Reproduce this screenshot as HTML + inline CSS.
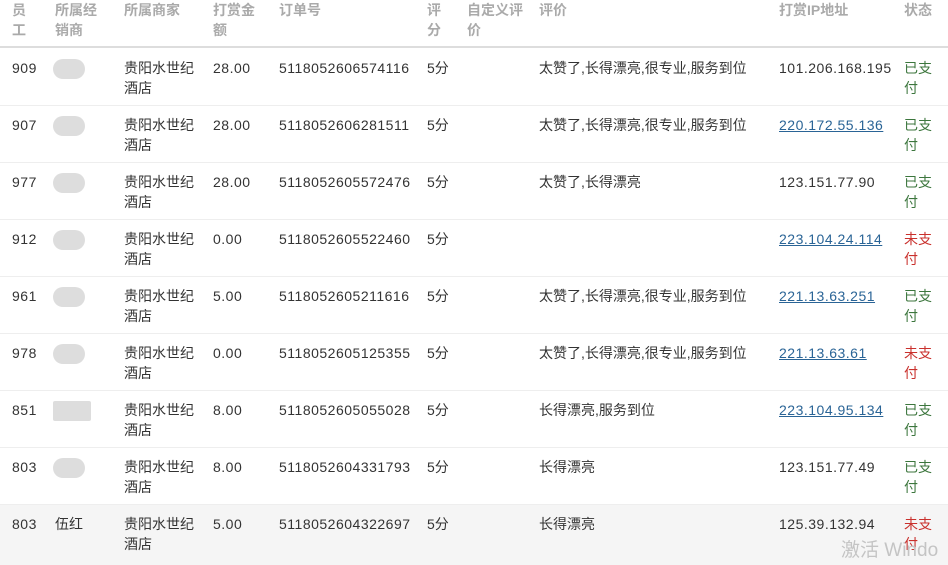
<!DOCTYPE html>
<html><head><meta charset="utf-8"><style>
body{margin:0;width:948px;height:565px;overflow:hidden;background:#fff;font-family:"Liberation Sans","Noto Sans CJK SC",sans-serif;font-size:14px;color:#333;position:relative}
.a{position:absolute;line-height:20px;white-space:nowrap}
.n{letter-spacing:0.5px}
.h{color:#aaa;font-weight:bold}
.ln{position:absolute;left:0;width:948px;height:1px;background:#eee}
.blob{position:absolute;height:20px;border-radius:10px;background:#ddd}
a{color:#2a6496;text-decoration:underline}
.g{color:#3c763d}.r{color:#c9302c}
</style></head><body>
<div style="position:absolute;left:0;top:505px;width:948px;height:60px;background:#f5f5f5"></div>
<div style="position:absolute;left:0;top:46px;width:948px;height:2px;background:#ddd"></div>
<div class="a h" style="left:12px;top:0">员<br>工</div>
<div class="a h" style="left:55px;top:0">所属经<br>销商</div>
<div class="a h" style="left:124px;top:0">所属商家</div>
<div class="a h" style="left:213px;top:0">打赏金<br>额</div>
<div class="a h" style="left:279px;top:0">订单号</div>
<div class="a h" style="left:427px;top:0">评<br>分</div>
<div class="a h" style="left:467px;top:0">自定义评<br>价</div>
<div class="a h" style="left:539px;top:0">评价</div>
<div class="a h" style="left:779px;top:0">打赏IP地址</div>
<div class="a h" style="left:904px;top:0">状态</div>
<div id="rows"></div>
<script>
var d=[["909","28.00","5118052606574116","太赞了,长得漂亮,很专业,服务到位","101.206.168.195",0,1],
["907","28.00","5118052606281511","太赞了,长得漂亮,很专业,服务到位","220.172.55.136",1,1],
["977","28.00","5118052605572476","太赞了,长得漂亮","123.151.77.90",0,1],
["912","0.00","5118052605522460","","223.104.24.114",1,0],
["961","5.00","5118052605211616","太赞了,长得漂亮,很专业,服务到位","221.13.63.251",1,1],
["978","0.00","5118052605125355","太赞了,长得漂亮,很专业,服务到位","221.13.63.61",1,0],
["851","8.00","5118052605055028","长得漂亮,服务到位","223.104.95.134",1,1],
["803","8.00","5118052604331793","长得漂亮","123.151.77.49",0,1],
["803","5.00","5118052604322697","长得漂亮","125.39.132.94",0,0]];
var h="";
d.forEach(function(r,i){var t=58+i*57;
if(i>0)h+='<div class="ln" style="top:'+(t-10)+'px"></div>';
h+='<div class="a n" style="left:12px;top:'+t+'px">'+r[0]+'</div>';
if(i==8)h+='<div class="a" style="left:55px;top:'+t+'px">伍红</div>';
else h+='<div class="blob" style="left:53px;top:'+(t+1)+'px;width:'+(i==6?38:32)+'px;border-radius:'+(i==6?'2px':'10px')+'"></div>';
h+='<div class="a" style="left:124px;top:'+t+'px">贵阳水世纪<br>酒店</div>';
h+='<div class="a n" style="left:213px;top:'+t+'px">'+r[1]+'</div>';
h+='<div class="a n" style="left:279px;top:'+t+'px">'+r[2]+'</div>';
h+='<div class="a" style="left:427px;top:'+t+'px">5分</div>';
h+='<div class="a" style="left:539px;top:'+t+'px">'+r[3]+'</div>';
h+='<div class="a n" style="left:779px;top:'+t+'px">'+(r[5]?'<a>'+r[4]+'</a>':r[4])+'</div>';
h+='<div class="a '+(r[6]?'g':'r')+'" style="left:904px;top:'+t+'px">'+(r[6]?'已支':'未支')+'<br>付</div>';
});
document.getElementById('rows').innerHTML=h;
</script>
<div class="a" style="left:841px;top:538px;font-size:19px;line-height:26px;color:#c4c4c4">激活 Windo</div>
</body></html>
